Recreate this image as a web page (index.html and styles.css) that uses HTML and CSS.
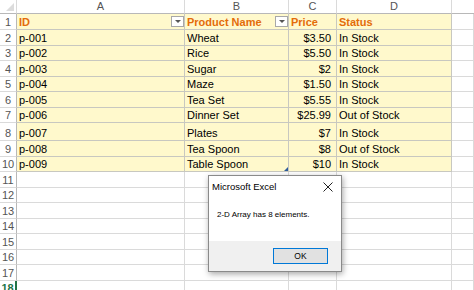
FILE: index.html
```html
<!DOCTYPE html>
<html lang="en">
<head>
    <meta charset="UTF-8">
    <title>Microsoft Excel - Products</title>
    <link rel="stylesheet" href="styles.css">
</head>
<body>
    <div class="sheet">
        <div class="row heads">
            <div class="corner"><span class="tri"></span></div>
            <div class="ch">A</div>
            <div class="ch">B</div>
            <div class="ch">C</div>
            <div class="ch">D</div>
            <div class="ch last"></div>
        </div>

        <div class="row r1">
            <div class="rh">1</div>
            <div class="c t hd">ID<span class="filter"></span></div>
            <div class="c t hd">Product Name<span class="filter"></span></div>
            <div class="c t hd">Price</div>
            <div class="c t hd">Status</div>
            <div class="c"></div>
        </div>
        <div class="row">
            <div class="rh">2</div>
            <div class="c t">p-001</div>
            <div class="c t">Wheat</div>
            <div class="c t num">$3.50</div>
            <div class="c t">In Stock</div>
            <div class="c"></div>
        </div>
        <div class="row">
            <div class="rh">3</div>
            <div class="c t">p-002</div>
            <div class="c t">Rice</div>
            <div class="c t num">$5.50</div>
            <div class="c t">In Stock</div>
            <div class="c"></div>
        </div>
        <div class="row">
            <div class="rh">4</div>
            <div class="c t">p-003</div>
            <div class="c t">Sugar</div>
            <div class="c t num">$2</div>
            <div class="c t">In Stock</div>
            <div class="c"></div>
        </div>
        <div class="row">
            <div class="rh">5</div>
            <div class="c t">p-004</div>
            <div class="c t">Maze</div>
            <div class="c t num">$1.50</div>
            <div class="c t">In Stock</div>
            <div class="c"></div>
        </div>
        <div class="row">
            <div class="rh">6</div>
            <div class="c t">p-005</div>
            <div class="c t">Tea Set</div>
            <div class="c t num">$5.55</div>
            <div class="c t">In Stock</div>
            <div class="c"></div>
        </div>
        <div class="row">
            <div class="rh">7</div>
            <div class="c t">p-006</div>
            <div class="c t">Dinner Set</div>
            <div class="c t num">$25.99</div>
            <div class="c t">Out of Stock</div>
            <div class="c"></div>
        </div>
        <div class="row tall">
            <div class="rh">8</div>
            <div class="c t">p-007</div>
            <div class="c t">Plates</div>
            <div class="c t num">$7</div>
            <div class="c t">In Stock</div>
            <div class="c"></div>
        </div>
        <div class="row">
            <div class="rh">9</div>
            <div class="c t">p-008</div>
            <div class="c t">Tea Spoon</div>
            <div class="c t num">$8</div>
            <div class="c t">Out of Stock</div>
            <div class="c"></div>
        </div>
        <div class="row">
            <div class="rh">10</div>
            <div class="c t">p-009</div>
            <div class="c t handle-cell">Table Spoon<span class="handle"></span></div>
            <div class="c t num">$10</div>
            <div class="c t">In Stock</div>
            <div class="c"></div>
        </div>

        <div class="row"><div class="rh">11</div><div class="c"></div><div class="c"></div><div class="c"></div><div class="c"></div><div class="c"></div></div>
        <div class="row"><div class="rh">12</div><div class="c"></div><div class="c"></div><div class="c"></div><div class="c"></div><div class="c"></div></div>
        <div class="row"><div class="rh">13</div><div class="c"></div><div class="c"></div><div class="c"></div><div class="c"></div><div class="c"></div></div>
        <div class="row"><div class="rh">14</div><div class="c"></div><div class="c"></div><div class="c"></div><div class="c"></div><div class="c"></div></div>
        <div class="row"><div class="rh">15</div><div class="c"></div><div class="c"></div><div class="c"></div><div class="c"></div><div class="c"></div></div>
        <div class="row"><div class="rh">16</div><div class="c"></div><div class="c"></div><div class="c"></div><div class="c"></div><div class="c"></div></div>
        <div class="row"><div class="rh">17</div><div class="c"></div><div class="c"></div><div class="c"></div><div class="c"></div><div class="c"></div></div>
        <div class="row"><div class="rh sel">18</div><div class="c"></div><div class="c"></div><div class="c"></div><div class="c"></div><div class="c"></div></div>

        <!-- message box -->
        <div class="msgbox">
            <div class="msg-title">
                <span>Microsoft Excel</span>
                <svg class="close" width="10" height="10" viewBox="0 0 10 10">
                    <path d="M0.5 0.5 L9.5 9.5 M9.5 0.5 L0.5 9.5" stroke="#222" stroke-width="1" fill="none"/>
                </svg>
            </div>
            <div class="msg-body">2-D Array has 8 elements.</div>
            <div class="msg-foot">
                <button class="ok-btn">OK</button>
            </div>
        </div>
    </div>
</body>
</html>
```

FILE: styles.css
```css
body {
    margin: 0;
    padding: 0;
    background-color: #ffffff;
    font-family: "Liberation Sans", Arial, sans-serif;
    font-size: 11px;
    color: #000000;
    overflow: hidden;
}

.sheet {
    position: relative;
    width: 474px;
    height: 290px;
    overflow: hidden;
}

.row {
    display: grid;
    grid-template-columns: 17px 168px 104px 48px 115px 1fr;
    height: 15.5px;
}

.row.heads {
    height: 14px;
}

.row.r1 {
    height: 16px;
}

.row.tall {
    height: 18px;
}

.row > div {
    box-sizing: border-box;
    border-right: 1px solid #dadada;
    border-bottom: 1px solid #dadada;
    display: flex;
    align-items: flex-end;
    line-height: 14px;
    white-space: nowrap;
    overflow: hidden;
}

/* column and row headers */
.corner {
    position: relative;
    background: #ffffff;
}

.corner .tri {
    position: absolute;
    right: 2px;
    bottom: 2px;
    width: 0;
    height: 0;
    border-left: 8px solid transparent;
    border-bottom: 8px solid #dcdcdc;
}

.heads > div {
    border-bottom-color: #b8b8b8;
}

.ch {
    justify-content: center;
    color: #555555;
    font-size: 11px;
    line-height: 13px;
}

.ch.last {
    border-right: none;
}

.rh {
    justify-content: center;
    color: #555555;
    border-right-color: #b8b8b8 !important;
}

.rh.sel {
    color: #217346;
    font-weight: bold;
    border-right: 2px solid #217346 !important;
}

/* table cells */
.c {
    padding-left: 2px;
}

.c.t {
    background-color: #fff9cc;
    border-right-color: #c8c8c0;
    border-bottom-color: #c8c8c0;
}

.c.num {
    justify-content: flex-end;
    padding-right: 5px;
}

.c.hd {
    color: #e46c0a;
    font-weight: bold;
    justify-content: space-between;
    align-items: center;
}

.filter {
    position: relative;
    width: 13px;
    height: 11px;
    box-sizing: border-box;
    margin-right: 0;
    border: 1px solid #a8a8a8;
    background: #ffffff;
}

.filter::after {
    content: "";
    position: absolute;
    left: 3px;
    top: 3px;
    border-left: 3px solid transparent;
    border-right: 3px solid transparent;
    border-top: 3px solid #555555;
}

.handle-cell {
    position: relative;
}

.handle {
    position: absolute;
    right: 0;
    bottom: 0;
    width: 0;
    height: 0;
    border-left: 4px solid transparent;
    border-bottom: 4px solid #2e5c9a;
}

/* message box */
.msgbox {
    position: absolute;
    left: 208px;
    top: 175px;
    width: 134px;
    height: 97px;
    box-sizing: border-box;
    border: 1px solid #8a8a8a;
    background: #ffffff;
    box-shadow: 1px 2px 6px rgba(0, 0, 0, 0.35);
    display: flex;
    flex-direction: column;
}

.msg-title {
    display: flex;
    justify-content: space-between;
    align-items: center;
    height: 21px;
    padding: 0 8px 0 3px;
    font-size: 9.5px;
}

.msg-body {
    flex: 1;
    padding: 13px 0 0 8px;
    font-size: 8px;
}

.msg-foot {
    height: 30px;
    background: #f0f0f0;
    display: flex;
    justify-content: flex-end;
    align-items: center;
    padding-right: 13px;
}

.ok-btn {
    width: 55px;
    height: 16px;
    box-sizing: border-box;
    padding: 0;
    border: 1px solid #0078d7;
    background: #e1e1e1;
    font-family: "Liberation Sans", Arial, sans-serif;
    font-size: 8.5px;
    color: #000000;
    box-shadow: inset 0 0 0 1px #e1e1e1;
}
```
